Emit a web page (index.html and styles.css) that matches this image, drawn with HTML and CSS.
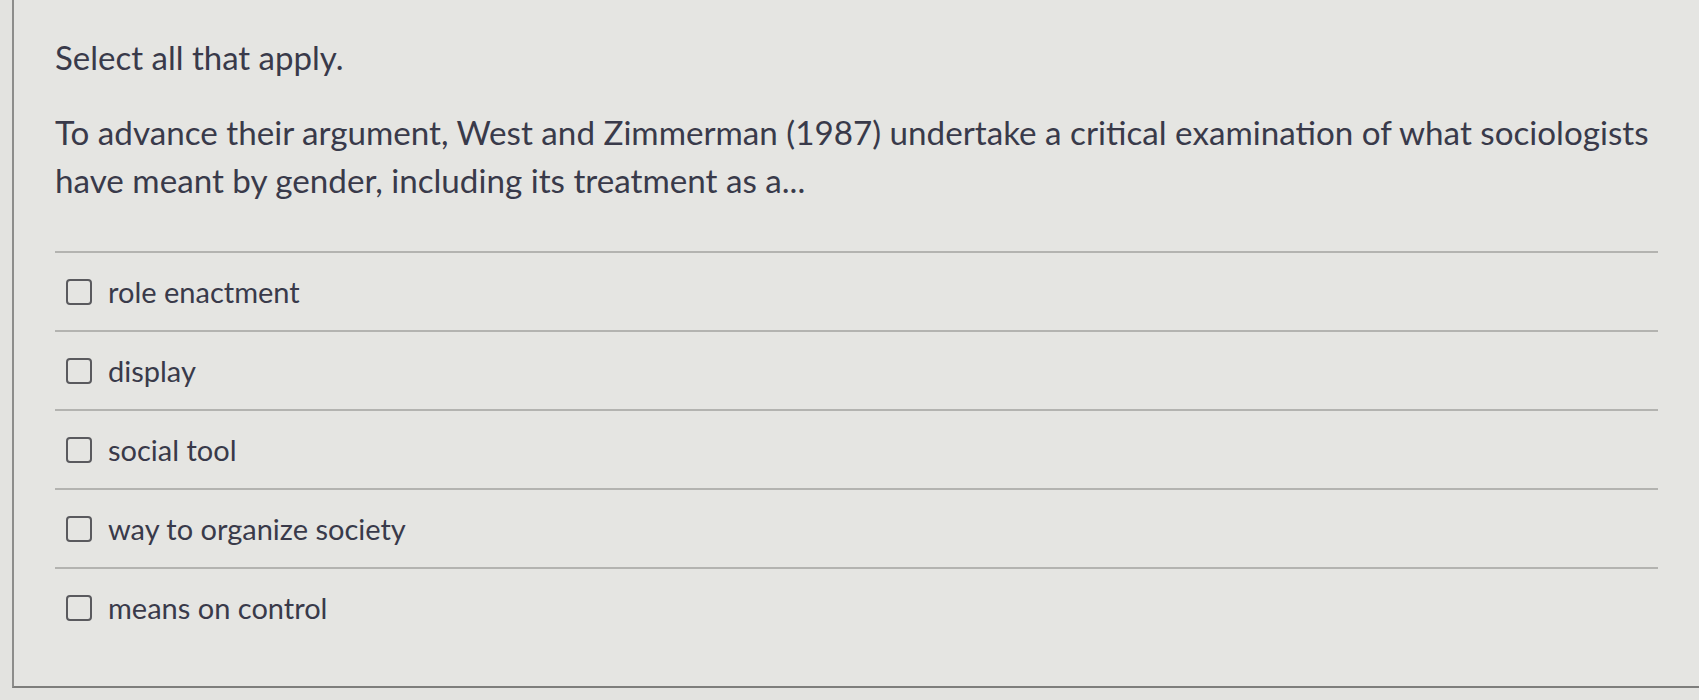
FILE: index.html
```html
<!DOCTYPE html>
<html>
<head>
<meta charset="utf-8">
<link rel="stylesheet" href="styles.css">
</head>
<body>
<div class="card">
  <div class="content">
    <p class="instruction">Select all that apply.</p>
    <p class="question">To advance their argument, West and Zimmerman (1987) undertake a critical examination of what sociologists have meant by gender, including its treatment as a...</p>
    <ul class="options">
      <li class="option"><span class="box"></span><span class="label">role enactment</span></li>
      <li class="option"><span class="box"></span><span class="label">display</span></li>
      <li class="option"><span class="box"></span><span class="label">social tool</span></li>
      <li class="option"><span class="box"></span><span class="label">way to organize society</span></li>
      <li class="option"><span class="box"></span><span class="label">means on control</span></li>
    </ul>
  </div>
</div>
</body>
</html>
```

FILE: styles.css
```css
html, body {
  margin: 0;
  padding: 0;
}
body {
  background: #e3e3e0;
  font-family: "Lato", "Liberation Sans", sans-serif;
  color: #393a4a;
  height: 700px;
  overflow: hidden;
}
.card {
  margin-left: 12px;
  border-left: 2px solid #8d8d8b;
  border-bottom: 2px solid #7e7e7c;
  height: 688px;
  box-sizing: border-box;
  background: #e5e5e2;
}
.content {
  padding: 37px 41px 0 41px;
}
.instruction {
  margin: 0;
  font-size: 33px;
  line-height: 40px;
}
.question {
  margin: 31px 0 0 0;
  font-size: 33.2px;
  line-height: 48px;
  max-width: 1600px;
}
.options {
  list-style: none;
  margin: 47px 0 0 0;
  padding: 0;
}
.option {
  display: flex;
  align-items: center;
  gap: 16px;
  height: 79px;
  box-sizing: border-box;
  border-top: 2px solid #b3b3b0;
  padding-left: 11px;
  font-size: 29px;
}
.box {
  width: 22px;
  height: 22px;
  border: 2px solid #5a5a5e;
  border-radius: 4px;
  flex: none;
}
```
